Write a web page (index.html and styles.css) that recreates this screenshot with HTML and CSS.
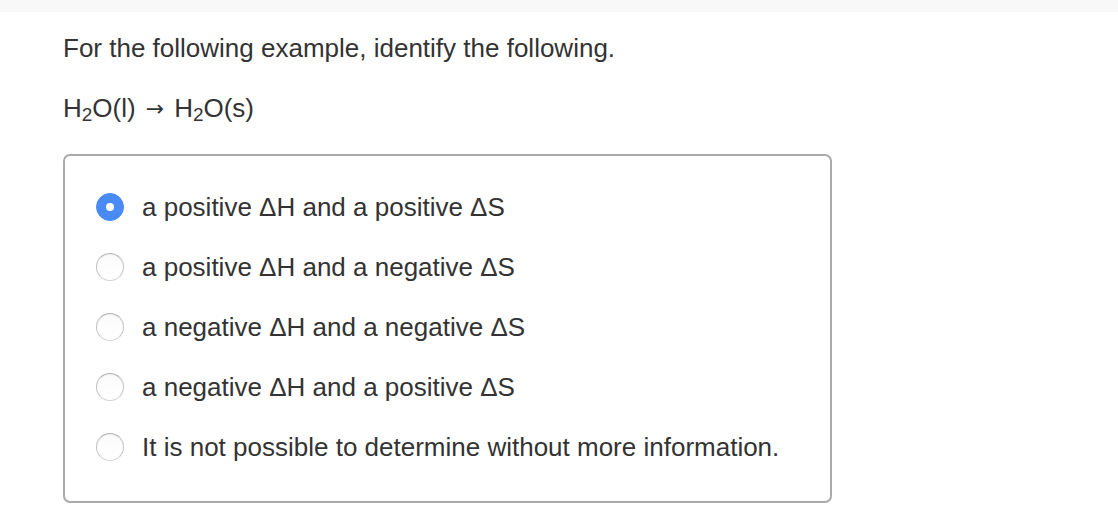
FILE: index.html
```html
<!DOCTYPE html>
<html>
<head>
<meta charset="utf-8">
<link rel="stylesheet" href="styles.css">
</head>
<body>
<div class="topbar"></div>
<main class="content">
  <p class="prompt">For the following example, identify the following.</p>
  <p class="equation">H<sub>2</sub>O(l)<span class="arrow">→</span>H<sub>2</sub>O(s)</p>
  <div class="choices">
    <label class="choice"><span class="radio checked"></span><span class="label">a positive ΔH and a positive ΔS</span></label>
    <label class="choice"><span class="radio"></span><span class="label">a positive ΔH and a negative ΔS</span></label>
    <label class="choice"><span class="radio"></span><span class="label">a negative ΔH and a negative ΔS</span></label>
    <label class="choice"><span class="radio"></span><span class="label">a negative ΔH and a positive ΔS</span></label>
    <label class="choice"><span class="radio"></span><span class="label">It is not possible to determine without more information.</span></label>
  </div>
</main>
</body>
</html>
```

FILE: styles.css
```css
html, body {
  margin: 0;
  padding: 0;
  background: #fff;
}
body {
  font-family: "Liberation Sans", Arial, sans-serif;
  color: #333;
}
.topbar {
  height: 12px;
  background: #f8f8f8;
}
.content {
  padding-left: 63px;
  padding-top: 21px;
}
.prompt {
  margin: 0;
  font-size: 26px;
  line-height: 30px;
}
.equation {
  margin: 30px 0 0 0;
  font-size: 26px;
  line-height: 30px;
}
.equation sub {
  font-size: 19px;
  vertical-align: -4px;
  line-height: 0;
}
.arrow {
  display: inline-block;
  font-family: "DejaVu Sans", sans-serif;
  font-size: 22px;
  vertical-align: 1px;
  padding: 0 10px 0 10px;
}
.choices {
  margin-top: 30px;
  border: 2px solid #aaa;
  border-radius: 7px;
  padding: 37px 0 0 31px;
  box-sizing: border-box;
  width: 769px;
  height: 349px;
  display: flex;
  flex-direction: column;
  gap: 32px;
}
.choice {
  display: flex;
  align-items: center;
  height: 28px;
  font-size: 26px;
}
.radio {
  width: 26px;
  height: 26px;
  border-radius: 50%;
  border: 1px solid #c4c4c4;
  border-top-color: #b4b4b4;
  border-bottom-color: #d4d4d4;
  background: linear-gradient(#fbfbfb, #ffffff);
  box-shadow: inset 0 1px 1px rgba(0,0,0,0.06);
  margin-right: 18px;
  flex: none;
  position: relative;
}
.radio.checked {
  background: #4a8af4;
  border-color: #4a8af4;
  box-shadow: none;
}
.radio.checked::after {
  content: "";
  position: absolute;
  width: 8px;
  height: 8px;
  border-radius: 50%;
  background: #fff;
  left: 9px;
  top: 9px;
}
```
